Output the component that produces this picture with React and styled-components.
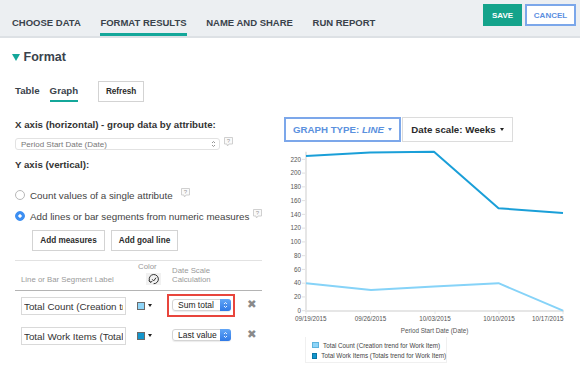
import React from 'react'
import styled, { createGlobalStyle } from 'styled-components'

const GlobalStyle = createGlobalStyle`
  html, body {
    margin: 0;
    padding: 0;
    background: #fff;
  }
  body {
    font-family: 'Liberation Sans', Arial, Helvetica, sans-serif;
    color: #333;
  }
  #root {
    width: 580px;
    height: 371px;
    overflow: hidden;
  }
`

const Header = styled.header`
  display: flex;
  height: 36px;
  background: #eceff2;
  border-bottom: 2px solid #dde1e5;
  padding-left: 12px;
`

const NavTab = styled.div`
  box-sizing: border-box;
  height: 36px;
  padding-top: 17px;
  margin-right: 19.6px;
  font-size: 9.5px;
  line-height: 11px;
  font-weight: bold;
  color: #39424b;
  white-space: nowrap;
  border-bottom: 3px solid ${p => (p.$active ? '#14a79a' : 'transparent')};
`

const Actions = styled.div`
  margin-left: auto;
  display: flex;
  gap: 3px;
  padding: 4px 4px 0 0;
`

const SaveButton = styled.button`
  width: 39px;
  height: 22px;
  border: none;
  background: #14a38b;
  color: #fff;
  font-family: inherit;
  font-size: 8px;
  font-weight: bold;
  padding: 0;
`

const CancelButton = styled.button`
  width: 51px;
  height: 22px;
  box-sizing: border-box;
  border: 2px solid #7ba7ea;
  background: #fff;
  color: #5b8fdf;
  font-family: inherit;
  font-size: 8px;
  font-weight: bold;
  padding: 0;
`

const FormatTitle = styled.h2`
  display: flex;
  align-items: center;
  gap: 3.5px;
  height: 16px;
  margin: 11px 0 0;
  padding-left: 12px;
  font-size: 12.5px;
  font-weight: bold;
  color: #3a434c;
`

const Triangle = styled.span`
  width: 0;
  height: 0;
  margin-top: 1px;
  border-left: 4px solid transparent;
  border-right: 4px solid transparent;
  border-top: 7px solid #14a79a;
`

const Body = styled.div`
  display: flex;
`

const LeftCol = styled.section`
  width: 269px;
  flex-shrink: 0;
  box-sizing: border-box;
  padding-left: 15px;
`

const RightCol = styled.section`
  margin-left: 15px;
  flex: 1;
`

const ViewTabs = styled.div`
  display: flex;
  height: 21px;
  margin-top: 16px;
`

const ViewTab = styled.div`
  box-sizing: border-box;
  display: flex;
  align-items: center;
  margin-right: ${p => p.$gap}px;
  font-size: 9.7px;
  font-weight: bold;
  color: #3a434c;
  border-bottom: 2px solid ${p => (p.$active ? '#14a79a' : 'transparent')};
`

const PlainButton = styled.button`
  box-sizing: border-box;
  width: ${p => p.$w}px;
  height: 21px;
  padding: 0;
  border: 1px solid #d3d3d3;
  background: #fff;
  color: #2b2b2b;
  font-family: inherit;
  font-size: 8.2px;
  font-weight: bold;
`

const FieldLabel = styled.div`
  margin-top: ${p => p.$mt}px;
  font-size: 9.7px;
  line-height: 12px;
  font-weight: bold;
  color: #333;
`

const SelectRow = styled.div`
  display: flex;
  align-items: center;
  margin-top: 7px;
  height: 12px;
`

const AttrSelect = styled.div`
  box-sizing: border-box;
  width: 205px;
  height: 12px;
  display: flex;
  align-items: center;
  justify-content: space-between;
  padding: 0 3px 0 5px;
  border: 1px solid #e2e2e2;
  border-radius: 3px;
  font-size: 8px;
  color: #777;
`

const HelpWrap = styled.span`
  display: inline-flex;
  margin-left: ${p => p.$ml}px;
  margin-top: ${p => p.$mt || 0}px;
`

const RadioRow = styled.div`
  display: flex;
  align-items: center;
  height: 14px;
  margin-top: ${p => p.$mt}px;
  font-size: 9.8px;
  color: #444;
`

const RadioDot = styled.span`
  box-sizing: border-box;
  width: 10px;
  height: 10px;
  margin-right: 5px;
  border-radius: 50%;
  border: 1px solid ${p => (p.$checked ? '#3d8ff2' : '#b8b8b8')};
  background: ${p =>
    p.$checked ? 'radial-gradient(circle, #fff 0 1.4px, #3d8ff2 1.9px)' : '#fff'};
`

const ButtonRow = styled.div`
  display: flex;
  gap: 6px;
  margin-top: 7px;
  padding-left: 17px;
`

const Divider = styled.div`
  width: 247px;
  height: 1px;
  margin-top: 9px;
  background: #e2e2e2;
`

const MeasureGrid = styled.div`
  display: grid;
  grid-template-columns: 122px 30px 80px 1fr;
  width: 247px;
`

const MeasureHead = styled(MeasureGrid)`
  height: 29px;
  border-bottom: 1px solid #b4b4b4;
  font-size: 7.8px;
  line-height: 9px;
  color: #9a9a9a;
`

const HeadCell = styled.div`
  padding-top: ${p => p.$pt}px;
  padding-left: ${p => p.$pl || 0}px;
`

const ResetIcon = styled.span`
  display: flex;
  align-items: center;
  justify-content: center;
  width: 15px;
  height: 12px;
  margin: 2px 0 0 8px;
  background: #f1f1f1;
  color: #333;
`

const MeasureRow = styled(MeasureGrid)`
  height: 30px;
  align-items: center;
`

const LabelInput = styled.input`
  box-sizing: border-box;
  width: 105px;
  height: 18px;
  margin-left: 6px;
  padding: 0 2px;
  border: 1px solid #d9d9d9;
  font-family: 'Liberation Sans', Arial, sans-serif;
  font-size: 9.8px;
  color: #333;
  outline: none;
`

const ColorPick = styled.div`
  display: flex;
  align-items: center;
  gap: 3px;
  margin-top: -1px;
`

const Swatch = styled.span`
  box-sizing: border-box;
  width: 8px;
  height: 8px;
  background: ${p => p.$color};
  border: 1px solid #6a6a6a;
`

const Caret = styled.span`
  width: 0;
  height: 0;
  border-left: ${p => p.$s}px solid transparent;
  border-right: ${p => p.$s}px solid transparent;
  border-top: ${p => p.$s + 1}px solid ${p => p.$color || '#222'};
`

const FlagBox = styled.div`
  justify-self: start;
  margin-top: -1px;
  padding: 3px 2px 4px 3px;
  border: 2px solid ${p => (p.$flagged ? '#e8453c' : 'transparent')};
`

const DateSelect = styled.div`
  box-sizing: border-box;
  width: 59px;
  height: 12px;
  display: flex;
  align-items: center;
  padding-left: 5px;
  border: 1px solid #d4d4d4;
  border-radius: 3px;
  box-shadow: 0 1px 1px rgba(0, 0, 0, 0.08);
  font-size: 8.5px;
  color: #222;
`

const Stepper = styled.span`
  display: flex;
  align-items: center;
  justify-content: center;
  margin-left: auto;
  width: 11px;
  height: 12px;
  margin-right: -1px;
  border-radius: 0 3px 3px 0;
  background: linear-gradient(#62a6f6, #2f79e6);
`

const RemoveIcon = styled.span`
  margin-top: -4px;
  font-family: 'DejaVu Sans', sans-serif;
  font-size: 11.5px;
  line-height: 12px;
  color: #8a8a8a;
`

const GraphControls = styled.div`
  display: flex;
  gap: 1px;
  height: 25px;
  margin-top: 52px;
`

const DropButton = styled.button`
  box-sizing: border-box;
  width: ${p => p.$w}px;
  display: flex;
  align-items: center;
  justify-content: center;
  gap: 4px;
  padding: 0;
  background: #fff;
  border: ${p => (p.$primary ? '2px solid #7ca7ea' : '1px solid #dcdcdc')};
  color: ${p => (p.$primary ? '#5b91de' : '#2a2a2a')};
  font-family: inherit;
  font-size: 9.7px;
  font-weight: bold;

  em {
    font-style: italic;
  }
`

const ChartSvg = styled.svg`
  display: block;
  width: 296px;
  height: 195px;
`

const Legend = styled.div`
  box-sizing: border-box;
  width: 142px;
  margin-left: 21px;
  padding: 3px 0 1px 6px;
  border: 1px solid #f0f0f0;
  border-top: none;
  font-size: 6.3px;
  color: #444;
  white-space: nowrap;
`

const LegendItem = styled.div`
  display: flex;
  align-items: center;
  gap: 4px;
  height: 10.5px;
`

const LegendSwatch = styled.span`
  box-sizing: border-box;
  width: 7px;
  height: 6px;
  background: ${p => p.$color};
  border: 1px solid ${p => p.$border};
`

function Help() {
  return (
    <svg width="9" height="10" viewBox="0 0 9 10">
      <path d="M0.5 0.5h8v6.5h-3.5l-1.5 2l-0.5-2h-2.5z" fill="#fafafa" stroke="#c4c4c4" strokeWidth="0.8" />
      <text x="4.5" y="5.8" fontSize="6" textAnchor="middle" fill="#9a9a9a" fontFamily="Liberation Sans, sans-serif">?</text>
    </svg>
  )
}

function UpDown({ color = '#888', w = 5, h = 8 }) {
  return (
    <svg width={w} height={h} viewBox="0 0 5 8">
      <path d="M1 3l1.5-1.5L4 3M1 5l1.5 1.5L4 5" fill="none" stroke={color} strokeWidth="0.9" />
    </svg>
  )
}

function HistoryGlyph() {
  return (
    <svg width="13" height="12" viewBox="0 0 13 12">
      <path d="M3.4 9.2A4.6 4.6 0 1 1 6.6 10.7" fill="none" stroke="#333" strokeWidth="1" />
      <path d="M1.8 7.6l1.6 1.8l2-1.2" fill="none" stroke="#333" strokeWidth="1" />
      <path d="M5.2 6.3l1.5 1.6l2.3-3.2" fill="none" stroke="#333" strokeWidth="1" />
    </svg>
  )
}

const yTicks = [0, 20, 40, 60, 80, 100, 120, 140, 160, 180, 200, 220]
const yPos = v => 310.7 - v * 0.688

const totalWork = [[306, 225], [370, 230], [434, 231], [498.5, 149], [563, 142]]
const totalCount = [[306, 40], [371, 30], [434, 35], [498.5, 40], [563, 0]]

const xLabels = [
  { x: 295, text: '09/19/2015', anchor: 'start' },
  { x: 370.5, text: '09/26/2015', anchor: 'middle' },
  { x: 435, text: '10/03/2015', anchor: 'middle' },
  { x: 499, text: '10/10/2015', anchor: 'middle' },
  { x: 563.5, text: '10/17/2015', anchor: 'end' },
]

const toPoints = pts => pts.map(([x, v]) => `${x},${yPos(v)}`).join(' ')

function Chart() {
  const font = 'Liberation Sans, Arial, sans-serif'
  return (
    <ChartSvg viewBox="284 142 296 195">
      {yTicks.map(v => (
        <g key={v}>
          <line x1="302" x2="306" y1={yPos(v)} y2={yPos(v)} stroke="#d8d8d8" strokeWidth="0.8" />
          <text x="301" y={yPos(v) + 2.2} fontSize="6.3" textAnchor="end" fill="#555" fontFamily={font}>{v}</text>
        </g>
      ))}
      <line x1="306" x2="306" y1="151.7" y2="311.5" stroke="#e6e6e6" strokeWidth="2" />
      <line x1="305" x2="564" y1="311" y2="311" stroke="#e6e6e6" strokeWidth="2" />
      {[306, 370.5, 435, 499, 563].map(x => (
        <line key={x} x1={x} x2={x} y1="311" y2="314" stroke="#e0e0e0" strokeWidth="0.8" />
      ))}
      {xLabels.map(l => (
        <text key={l.text} x={l.x} y="320.5" fontSize="6.3" textAnchor={l.anchor} fill="#555" fontFamily={font}>{l.text}</text>
      ))}
      <text x="434.5" y="333.2" fontSize="6.3" textAnchor="middle" fill="#555" fontFamily={font}>Period Start Date (Date)</text>
      <polyline points={toPoints(totalCount)} fill="none" stroke="#86d3f8" strokeWidth="2" strokeLinejoin="round" />
      <polyline points={toPoints(totalWork)} fill="none" stroke="#1a9fd8" strokeWidth="2" strokeLinejoin="round" />
    </ChartSvg>
  )
}

const measures = [
  { label: 'Total Count (Creation trend for Work Item)', color: '#8fd5f8', calc: 'Sum total', flagged: true },
  { label: 'Total Work Items (Totals trend for Work Item)', color: '#1496cc', calc: 'Last value', flagged: false },
]

export default function App() {
  return (
    <>
      <GlobalStyle />
      <Header>
        <NavTab>CHOOSE DATA</NavTab>
        <NavTab $active>FORMAT RESULTS</NavTab>
        <NavTab>NAME AND SHARE</NavTab>
        <NavTab>RUN REPORT</NavTab>
        <Actions>
          <SaveButton>SAVE</SaveButton>
          <CancelButton>CANCEL</CancelButton>
        </Actions>
      </Header>

      <FormatTitle>
        <Triangle />
        Format
      </FormatTitle>

      <Body>
        <LeftCol>
          <ViewTabs>
            <ViewTab $gap={10}>Table</ViewTab>
            <ViewTab $gap={20} $active>Graph</ViewTab>
            <PlainButton $w={46}>Refresh</PlainButton>
          </ViewTabs>

          <FieldLabel $mt={17}>X axis (horizontal) - group data by attribute:</FieldLabel>
          <SelectRow>
            <AttrSelect>
              Period Start Date (Date)
              <UpDown />
            </AttrSelect>
            <HelpWrap $ml={4} $mt={-4}><Help /></HelpWrap>
          </SelectRow>

          <FieldLabel $mt={9}>Y axis (vertical):</FieldLabel>
          <RadioRow $mt={17}>
            <RadioDot />
            Count values of a single attribute
            <HelpWrap $ml={8} $mt={-4}><Help /></HelpWrap>
          </RadioRow>
          <RadioRow $mt={7}>
            <RadioDot $checked />
            Add lines or bar segments from numeric measures
            <HelpWrap $ml={4} $mt={-4}><Help /></HelpWrap>
          </RadioRow>

          <ButtonRow>
            <PlainButton $w={73}>Add measures</PlainButton>
            <PlainButton $w={67}>Add goal line</PlainButton>
          </ButtonRow>

          <Divider />

          <MeasureHead>
            <HeadCell $pt={14} $pl={6}>Line or Bar Segment Label</HeadCell>
            <HeadCell $pt={1} $pl={1}>
              Color
              <ResetIcon><HistoryGlyph /></ResetIcon>
            </HeadCell>
            <HeadCell $pt={5} $pl={5}>Date Scale<br />Calculation</HeadCell>
            <div />
          </MeasureHead>

          {measures.map(m => (
            <MeasureRow key={m.label}>
              <LabelInput readOnly defaultValue={m.label} />
              <ColorPick>
                <Swatch $color={m.color} />
                <Caret $s={2.5} />
              </ColorPick>
              <FlagBox $flagged={m.flagged}>
                <DateSelect>
                  {m.calc}
                  <Stepper><UpDown color="#fff" /></Stepper>
                </DateSelect>
              </FlagBox>
              <RemoveIcon>✖</RemoveIcon>
            </MeasureRow>
          ))}
        </LeftCol>

        <RightCol>
          <GraphControls>
            <DropButton $primary $w={117}>
              <span>GRAPH TYPE: <em>LINE</em></span>
              <Caret $s={2.5} $color="#5b91de" />
            </DropButton>
            <DropButton $w={111}>
              <span>Date scale: Weeks</span>
              <Caret $s={2.5} />
            </DropButton>
          </GraphControls>
          <Chart />
          <Legend>
            <LegendItem>
              <LegendSwatch $color="#8fd5f8" $border="#5fb4dc" />
              Total Count (Creation trend for Work Item)
            </LegendItem>
            <LegendItem>
              <LegendSwatch $color="#1496cc" $border="#0b76a6" />
              Total Work Items (Totals trend for Work Item)
            </LegendItem>
          </Legend>
        </RightCol>
      </Body>
    </>
  )
}
